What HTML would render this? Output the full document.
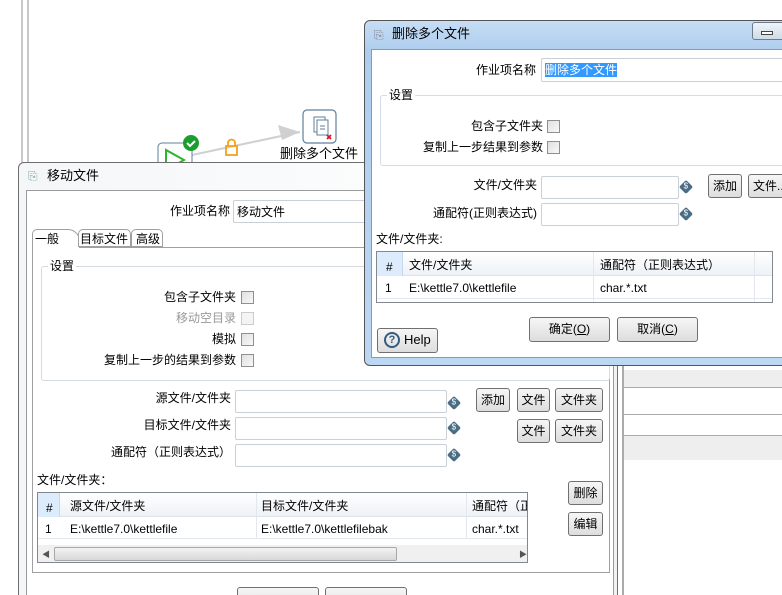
<!DOCTYPE html>
<html><head><meta charset="utf-8"><style>
*{box-sizing:border-box;margin:0;padding:0}
html,body{width:782px;height:595px;overflow:hidden}
body{position:relative;background:#fff;font-family:"Liberation Sans","Noto Sans CJK SC",sans-serif;font-size:12px;color:#000}
.a{position:absolute}
.t{position:absolute;white-space:nowrap;line-height:14px}
.r{text-align:right}
.in{position:absolute;background:#fff;border:1px solid #c9d0d8;border-radius:2px}
.btn{position:absolute;border:1px solid #707070;border-radius:3px;background:linear-gradient(#f6f6f6,#dddddd);text-align:center;line-height:22px;white-space:nowrap}
.cb{position:absolute;width:13px;height:13px;border:1px solid #8f8f8f;background:linear-gradient(135deg,#e0e0e0,#f8f8f8)}
.dol{position:absolute;width:10px;height:10px;background:#4a6d86;transform:rotate(45deg);border-radius:2px}
.dol:after{content:"$";position:absolute;transform:rotate(-45deg);color:#fff;font-size:8px;left:2px;top:-1px;line-height:11px}
.grp{position:absolute;border:1px solid #d5dce3;border-radius:3px}
.hd{position:absolute;background:linear-gradient(#fff,#eef2f6);border-bottom:1px solid #dde3ea;height:24px}
</style></head><body>
<div class="a" style="left:21px;top:0;width:2px;height:595px;background:#c8c8c8"></div>
<div class="a" style="left:27px;top:0;width:2px;height:595px;background:#c8c8c8"></div>
<svg class="a" style="left:150px;top:100px" width="220" height="90">
<line x1="42" y1="55" x2="150" y2="32" stroke="#d0d0d0" stroke-width="2"/>
<polygon points="150,32 128,25 132,40" fill="#d0d0d0"/>
<rect x="153" y="10" width="33" height="33" rx="4" fill="#fff" stroke="#5f7f99" stroke-width="1.2"/>
<rect x="164" y="17" width="11" height="15" fill="#fff" stroke="#5f7f99"/>
<rect x="167" y="20" width="11" height="15" fill="#fff" stroke="#5f7f99"/>
<path d="M170 26h5M170 29h5" stroke="#5f7f99"/>
<path d="M177 35l4 4M181 35l-4 4" stroke="#e01020" stroke-width="1.8"/>
<rect x="8" y="43" width="34" height="40" rx="4" fill="#fff" stroke="#5f7f99"/>
<polygon points="16,50 16,70 34,60" fill="none" stroke="#2db52d" stroke-width="2"/>
<circle cx="41" cy="43" r="8" fill="#1a9e2e"/>
<path d="M37 43l3 3 5-5" stroke="#fff" stroke-width="2" fill="none"/>
<rect x="76" y="46" width="11" height="9" fill="none" stroke="#f5a11c" stroke-width="1.8"/>
<path d="M78 46v-3a3.5 3.5 0 0 1 7 0v3" fill="none" stroke="#f5a11c" stroke-width="1.8"/>
</svg>
<div class="t" style="left:280px;top:147px;font-size:13px">删除多个文件</div>

<div class="a" style="left:622px;top:340px;width:2px;height:255px;background:#aaa"></div>
<div class="a" style="left:615px;top:340px;width:1px;height:255px;background:#ccc"></div>
<div class="a" style="left:624px;top:370px;width:158px;height:18px;background:#eee;border-bottom:1px solid #aaa"></div>
<div class="a" style="left:624px;top:414px;width:158px;height:1px;background:#aaa"></div>
<div class="a" style="left:624px;top:435px;width:158px;height:25px;background:#eee;border-top:1px solid #aaa"></div>

<div class="a" style="left:18px;top:162px;width:600px;height:440px;border:1px solid #6e6e6e;border-radius:6px 6px 0 0;background:linear-gradient(90deg,#f4f6f8,#fbfcfd 60%,#f0f2f4)"></div>
<div class="t" style="left:28px;top:169px;color:#8aa">⎘</div>
<div class="t" style="left:47px;top:169px;font-size:13px">移动文件</div>
<div class="a" style="left:26px;top:190px;width:588px;height:410px;background:#fff;border:1px solid #9a9a9a"></div>
<div class="t r" style="left:120px;top:204px;width:110px">作业项名称</div>
<div class="in" style="left:233px;top:200px;width:140px;height:23px"></div>
<div class="t" style="left:237px;top:205px">移动文件</div>
<div class="a" style="left:32px;top:247px;width:578px;height:326px;border:1px solid #a0a0a0;background:#fff"></div>
<div class="a" style="left:32px;top:229px;width:48px;height:19px;border:1px solid #a0a0a0;border-bottom:none;border-radius:5px 12px 0 0;background:#fff"></div>
<div class="a" style="left:78px;top:229px;width:53px;height:18px;border:1px solid #a0a0a0;border-radius:5px 5px 0 0;background:#fff"></div>
<div class="a" style="left:131px;top:229px;width:32px;height:18px;border:1px solid #a0a0a0;border-radius:5px 5px 0 0;background:#fff"></div>
<div class="t" style="left:35px;top:232px">一般</div>
<div class="t" style="left:80px;top:232px">目标文件</div>
<div class="t" style="left:136px;top:232px">高级</div>
<div class="grp" style="left:41px;top:266px;width:569px;height:115px"></div>
<div class="t" style="left:48px;top:259px;background:#fff;padding:0 2px">设置</div>
<div class="t r" style="left:80px;top:290px;width:156px">包含子文件夹</div><div class="cb" style="left:241px;top:291px"></div>
<div class="t r" style="left:80px;top:311px;width:156px;color:#999">移动空目录</div><div class="cb" style="left:241px;top:312px;border-color:#ccc;background:#f4f4f4"></div>
<div class="t r" style="left:80px;top:332px;width:156px">模拟</div><div class="cb" style="left:241px;top:333px"></div>
<div class="t r" style="left:60px;top:353px;width:176px">复制上一步的结果到参数</div><div class="cb" style="left:241px;top:354px"></div>
<div class="t r" style="left:100px;top:391px;width:131px">源文件/文件夹</div>
<div class="in" style="left:235px;top:390px;width:212px;height:23px"></div><div class="dol" style="left:449px;top:398px"></div>
<div class="t r" style="left:100px;top:418px;width:131px">目标文件/文件夹</div>
<div class="in" style="left:235px;top:417px;width:212px;height:23px"></div><div class="dol" style="left:449px;top:423px"></div>
<div class="t r" style="left:90px;top:445px;width:141px">通配符（正则表达式）</div>
<div class="in" style="left:235px;top:444px;width:212px;height:23px"></div><div class="dol" style="left:449px;top:450px"></div>
<div class="btn" style="left:476px;top:388px;width:34px;height:24px">添加</div>
<div class="btn" style="left:517px;top:388px;width:33px;height:24px">文件</div>
<div class="btn" style="left:555px;top:388px;width:48px;height:24px">文件夹</div>
<div class="btn" style="left:517px;top:419px;width:33px;height:24px">文件</div>
<div class="btn" style="left:555px;top:419px;width:48px;height:24px">文件夹</div>
<div class="t" style="left:37px;top:473px">文件/文件夹：</div>
<div class="a" style="left:37px;top:492px;width:491px;height:71px;border:1px solid #828790;background:#fff;overflow:hidden">
 <div class="hd" style="left:0;top:0;width:491px"></div>
 <div class="a" style="left:0;top:0;width:22px;height:24px;background:#dcecfc;border-right:1px solid #c9d8e8"></div>
 <div class="t" style="left:8px;top:8px">#</div>
 <div class="a" style="left:218px;top:0;width:1px;height:46px;background:#e3e8ee"></div>
 <div class="a" style="left:428px;top:0;width:1px;height:46px;background:#e3e8ee"></div>
 <div class="t" style="left:32px;top:6px">源文件/文件夹</div>
 <div class="t" style="left:223px;top:6px">目标文件/文件夹</div>
 <div class="t" style="left:434px;top:6px">通配符（正</div>
 <div class="t" style="left:7px;top:29px">1</div>
 <div class="t" style="left:32px;top:29px">E:\kettle7.0\kettlefile</div>
 <div class="t" style="left:223px;top:29px">E:\kettle7.0\kettlefilebak</div>
 <div class="t" style="left:434px;top:29px">char.*.txt</div>
 <div class="a" style="left:0;top:45px;width:491px;height:1px;background:#e3e8ee"></div>
 <div class="a" style="left:0;top:52px;width:491px;height:18px;background:#f0f0f0"></div>
 <div class="t" style="left:4px;top:55px;font-size:8px;color:#555">◀</div>
 <div class="t" style="left:481px;top:55px;font-size:8px;color:#555">▶</div>
 <div class="a" style="left:16px;top:54px;width:343px;height:14px;background:linear-gradient(#f3f3f3,#d8d8d8);border:1px solid #a8a8a8;border-radius:2px"></div>
</div>
<div class="btn" style="left:568px;top:481px;width:35px;height:24px">删除</div>
<div class="btn" style="left:568px;top:512px;width:35px;height:24px">编辑</div>
<div class="btn" style="left:237px;top:587px;width:82px;height:24px"></div>
<div class="btn" style="left:325px;top:587px;width:82px;height:24px"></div>

<div class="a" style="left:364px;top:20px;width:430px;height:346px;border:1px solid #555;border-radius:6px;background:linear-gradient(#c6ddf4,#aecdee 30px,#bcd7f2)"></div>
<div class="t" style="left:374px;top:28px;color:#889">⎘</div>
<div class="t" style="left:392px;top:27px;font-size:13px">删除多个文件</div>
<div class="a" style="left:752px;top:22px;width:34px;height:18px;border:1px solid #6a7c8e;border-radius:3px;background:linear-gradient(#f0f4f8,#cfdbe6)"></div>
<div class="a" style="left:761px;top:31px;width:12px;height:4px;border:1px solid #444;background:#fff"></div>
<div class="a" style="left:371px;top:49px;width:420px;height:309px;background:#fff;border:1px solid #8a9aac"></div>
<div class="t r" style="left:430px;top:63px;width:106px">作业项名称</div>
<div class="in" style="left:541px;top:58px;width:250px;height:24px"></div>
<div class="t" style="left:545px;top:63px;background:#3399ff;color:#fff">删除多个文件</div>
<div class="grp" style="left:380px;top:95px;width:410px;height:71px"></div>
<div class="t" style="left:387px;top:88px;background:#fff;padding:0 2px">设置</div>
<div class="t r" style="left:400px;top:119px;width:143px">包含子文件夹</div><div class="cb" style="left:547px;top:120px"></div>
<div class="t r" style="left:400px;top:140px;width:143px">复制上一步结果到参数</div><div class="cb" style="left:547px;top:141px"></div>
<div class="t r" style="left:430px;top:178px;width:107px">文件/文件夹</div>
<div class="in" style="left:541px;top:176px;width:138px;height:23px"></div><div class="dol" style="left:681px;top:182px"></div>
<div class="t r" style="left:410px;top:206px;width:127px">通配符(正则表达式)</div>
<div class="in" style="left:541px;top:203px;width:138px;height:23px"></div><div class="dol" style="left:681px;top:209px"></div>
<div class="btn" style="left:708px;top:174px;width:34px;height:24px">添加</div>
<div class="btn" style="left:748px;top:174px;width:40px;height:24px;text-align:left;padding-left:4px">文件...</div>
<div class="t" style="left:376px;top:232px">文件/文件夹:</div>
<div class="a" style="left:376px;top:251px;width:397px;height:52px;border:1px solid #828790;background:#fff;overflow:hidden">
 <div class="hd" style="left:0;top:0;width:397px"></div>
 <div class="a" style="left:0;top:0;width:26px;height:24px;background:#dcecfc;border-right:1px solid #c9d8e8"></div>
 <div class="t" style="left:9px;top:8px">#</div>
 <div class="a" style="left:216px;top:0;width:1px;height:50px;background:#e3e8ee"></div>
 <div class="a" style="left:377px;top:0;width:1px;height:50px;background:#e3e8ee"></div>
 <div class="t" style="left:32px;top:6px">文件/文件夹</div>
 <div class="t" style="left:223px;top:6px">通配符（正则表达式）</div>
 <div class="t" style="left:8px;top:29px">1</div>
 <div class="t" style="left:32px;top:29px">E:\kettle7.0\kettlefile</div>
 <div class="t" style="left:223px;top:29px">char.*.txt</div>
 <div class="a" style="left:0;top:46px;width:397px;height:1px;background:#e3e8ee"></div>
</div>
<div class="btn" style="left:529px;top:317px;width:81px;height:25px">确定(<u>O</u>)</div>
<div class="btn" style="left:617px;top:317px;width:81px;height:25px">取消(<u>C</u>)</div>
<div class="btn" style="left:377px;top:328px;width:61px;height:25px;text-align:left;padding-left:26px;font-size:13px">Help</div>
<div class="a" style="left:384px;top:332px;width:16px;height:16px;border:2px solid #335c7e;border-radius:50%;text-align:center;line-height:12px;font-size:11px;font-weight:bold;color:#335c7e">?</div>
</body></html>
